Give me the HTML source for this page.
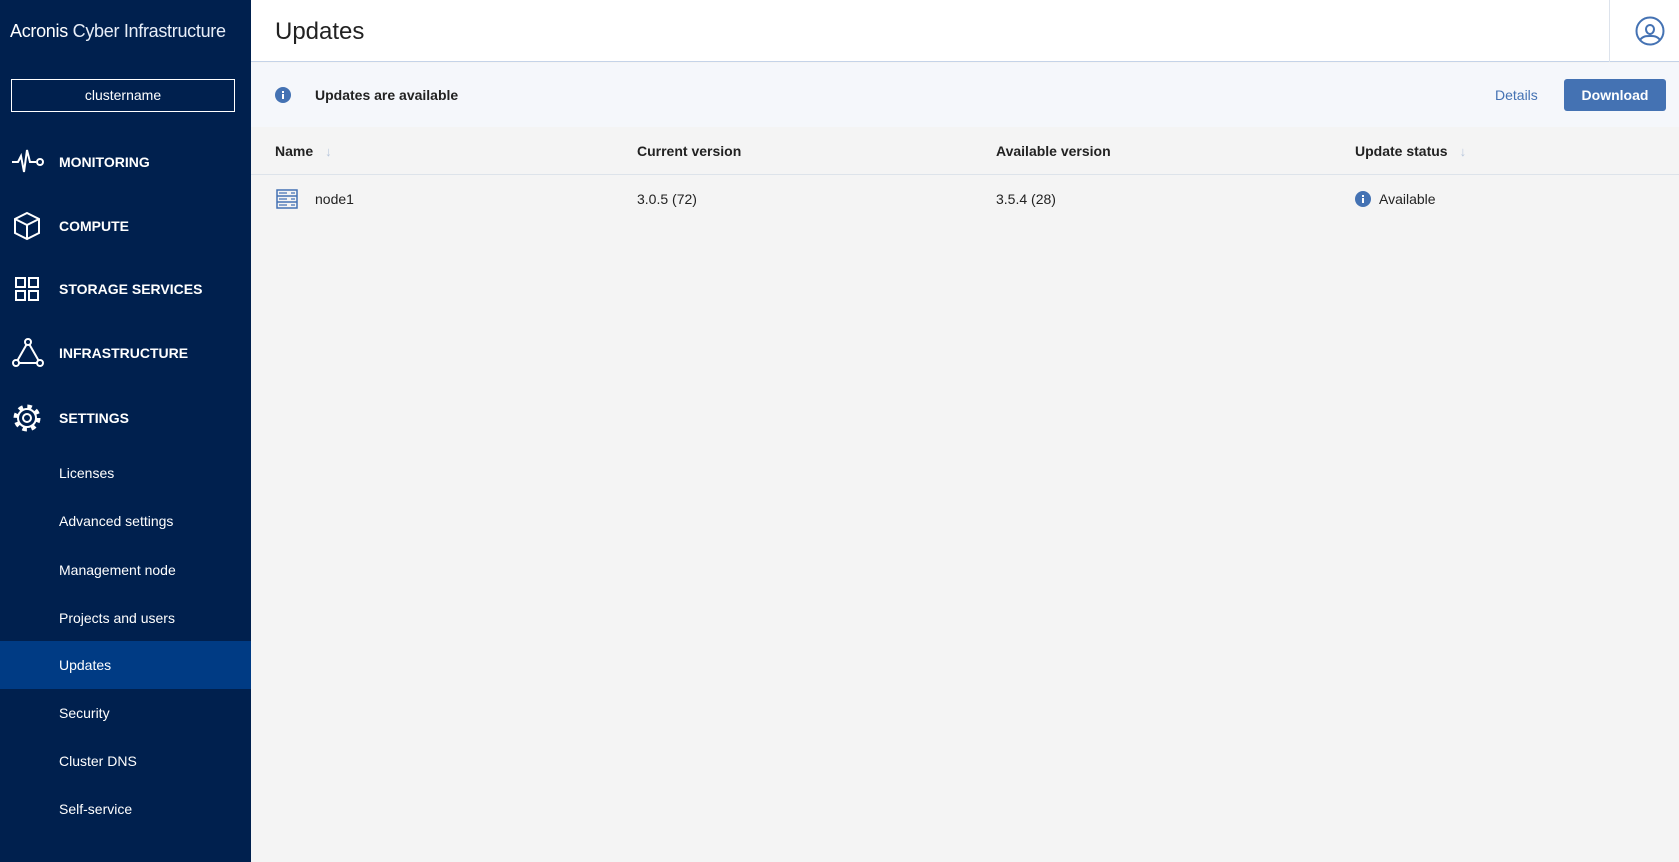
<!DOCTYPE html>
<html><head><style>
*{margin:0;padding:0;box-sizing:border-box}
body{width:1679px;height:862px;overflow:hidden;font-family:"Liberation Sans",sans-serif;background:#f4f4f4;position:relative;color:#222}
.sb{position:absolute;left:0;top:0;width:251px;height:862px;background:#00204e;color:#fff}
.logo{position:absolute;left:10px;top:21px;font-size:18px;letter-spacing:-0.3px;white-space:nowrap}
.cl{position:absolute;left:11px;top:79px;width:224px;height:33px;border:1px solid #fff;text-align:center;line-height:31px;font-size:14px}
.m{position:absolute;left:59px;font-size:14px;font-weight:bold;transform:translateY(-50%)}
.s{position:absolute;left:59px;font-size:14px;transform:translateY(-50%)}
.ic{position:absolute;left:12px;transform:translateY(-50%)}
.act{position:absolute;left:0;top:641px;width:251px;height:48px;background:#003b84}
.hd{position:absolute;left:251px;top:0;right:0;height:62px;background:#fff;border-bottom:1px solid #c5d3e8}
.hd h1{position:absolute;left:24px;top:18px;font-size:24px;font-weight:normal;color:#222}
.dv{position:absolute;left:1358px;top:0;width:1px;height:62px;background:#dde3ec}
.ib{position:absolute;left:251px;top:63px;right:0;height:64px;background:#f5f7fb}
.t{position:absolute;font-size:14px;transform:translateY(-50%);white-space:nowrap}
.btn{position:absolute;left:1564px;top:79px;width:102px;height:32px;background:#4472b3;border-radius:3px;color:#fff;font-weight:bold;font-size:14px;text-align:center;line-height:32px}
.line{position:absolute;left:251px;right:0;top:174px;height:1px;background:#dde3ea}
.arr{color:#b8c6dc;font-size:13px;margin-left:12px}
</style></head><body>
<div class="sb">
<div class="logo">Acronis <span style="font-weight:300;color:#e8eef8">Cyber Infrastructure</span></div>
<div class="cl">clustername</div>
<svg class="ic" style="top:162px" width="32" height="28" viewBox="0 0 32 28" fill="none" stroke="#fff" stroke-width="2"><path d="M0 14h6l3-6 3 16 3-22 3 12h6"/><circle cx="28" cy="14" r="3"/></svg>
<div class="m" style="top:162px">MONITORING</div>
<svg class="ic" style="top:226px;left:13px" width="28" height="30" viewBox="0 0 28 30" fill="none" stroke="#fff" stroke-width="2"><path d="M14 2 26 8v14l-12 6-12-6V8z M2 8l12 6 12-6 M14 14v14"/></svg>
<div class="m" style="top:226px">COMPUTE</div>
<svg class="ic" style="top:289px;left:15px" width="24" height="24" viewBox="0 0 24 24" fill="none" stroke="#fff" stroke-width="2"><rect x="1" y="1" width="9" height="9"/><rect x="14" y="1" width="9" height="9"/><rect x="1" y="14" width="9" height="9"/><rect x="14" y="14" width="9" height="9"/></svg>
<div class="m" style="top:289px">STORAGE SERVICES</div>
<svg class="ic" style="top:353px" width="32" height="30" viewBox="0 0 32 30" fill="none" stroke="#fff" stroke-width="2"><path d="M16 4 4 25h24z"/><circle cx="16" cy="4" r="3" fill="#00204e"/><circle cx="4" cy="25" r="3" fill="#00204e"/><circle cx="28" cy="25" r="3" fill="#00204e"/></svg>
<div class="m" style="top:353px">INFRASTRUCTURE</div>
<svg class="ic" style="top:418px;left:13px" width="28" height="28" viewBox="0 0 28 28" fill="none" stroke="#fff"><circle cx="14" cy="14" r="11.5" stroke-width="4" stroke-dasharray="4.5 4.53"/><circle cx="14" cy="14" r="9" stroke-width="2"/><circle cx="14" cy="14" r="4" stroke-width="2"/></svg>
<div class="m" style="top:418px">SETTINGS</div>
<div class="act"></div>
<div class="s" style="top:473px">Licenses</div>
<div class="s" style="top:521px">Advanced settings</div>
<div class="s" style="top:570px">Management node</div>
<div class="s" style="top:618px">Projects and users</div>
<div class="s" style="top:665px">Updates</div>
<div class="s" style="top:713px">Security</div>
<div class="s" style="top:761px">Cluster DNS</div>
<div class="s" style="top:809px">Self-service</div>
</div>
<div class="hd"><h1>Updates</h1><div class="dv"></div>
<svg style="position:absolute;left:1384px;top:16px" width="30" height="30" viewBox="0 0 30 30" fill="none" stroke="#4472b3" stroke-width="2"><circle cx="15" cy="15" r="13.5"/><path d="M11 13a4 4 0 0 1 8 0c0 3-2 5-4 5s-4-2-4-5z M5 24c3-4 6-4 10-4s7 0 10 4"/></svg>
</div>
<div class="ib"></div>
<svg style="position:absolute;left:275px;top:87px" width="16" height="16" viewBox="0 0 16 16"><circle cx="8" cy="8" r="8" fill="#4472b3"/><rect x="7" y="7" width="2" height="5" fill="#fff"/><rect x="7" y="4" width="2" height="2" fill="#fff"/></svg>
<div class="t" style="left:315px;top:95px;font-weight:bold">Updates are available</div>
<div class="t" style="left:1495px;top:95px;color:#4472b3">Details</div>
<div class="btn">Download</div>
<div class="t" style="left:275px;top:151px;font-weight:bold">Name<span class="arr">↓</span></div>
<div class="t" style="left:637px;top:151px;font-weight:bold">Current version</div>
<div class="t" style="left:996px;top:151px;font-weight:bold">Available version</div>
<div class="t" style="left:1355px;top:151px;font-weight:bold">Update status<span class="arr">↓</span></div>
<div class="line"></div>
<svg style="position:absolute;left:276px;top:189px" width="22" height="20" viewBox="0 0 22 20" fill="none" stroke="#4472b3" stroke-width="1.5"><rect x="1" y="1" width="20" height="18"/><path d="M1 7h20M1 13h20"/><path d="M3 4h8M3 10h8M3 16h8M15 4h4M15 10h4M15 16h4" stroke-width="1.2"/></svg>
<div class="t" style="left:315px;top:199px">node1</div>
<div class="t" style="left:637px;top:199px">3.0.5 (72)</div>
<div class="t" style="left:996px;top:199px">3.5.4 (28)</div>
<svg style="position:absolute;left:1355px;top:191px" width="16" height="16" viewBox="0 0 16 16"><circle cx="8" cy="8" r="8" fill="#4472b3"/><rect x="7" y="7" width="2" height="5" fill="#fff"/><rect x="7" y="4" width="2" height="2" fill="#fff"/></svg>
<div class="t" style="left:1379px;top:199px">Available</div>
</body></html>
